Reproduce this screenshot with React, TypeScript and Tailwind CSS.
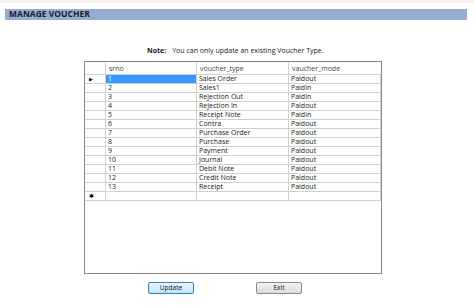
import React from 'react';

const ROWS = [
  { srno: '1', type: 'Sales Order', mode: 'Paidout' },
  { srno: '2', type: 'Sales1', mode: 'Paidin' },
  { srno: '3', type: 'Rejection Out', mode: 'Paidin' },
  { srno: '4', type: 'Rejection In', mode: 'Paidout' },
  { srno: '5', type: 'Receipt Note', mode: 'Paidin' },
  { srno: '6', type: 'Contra', mode: 'Paidout' },
  { srno: '7', type: 'Purchase Order', mode: 'Paidout' },
  { srno: '8', type: 'Purchase', mode: 'Paidout' },
  { srno: '9', type: 'Payment', mode: 'Paidout' },
  { srno: '10', type: 'Journal', mode: 'Paidout' },
  { srno: '11', type: 'Debit Note', mode: 'Paidout' },
  { srno: '12', type: 'Credit Note', mode: 'Paidout' },
  { srno: '13', type: 'Receipt', mode: 'Paidout' },
];

const cell = 'h-[9px] border-r border-b border-[#d0d0d0] pl-[2px] leading-[8px] overflow-hidden whitespace-nowrap';

const App: React.FC = () => {
  return (
    <div
      className="h-[305px] w-[474px] overflow-hidden bg-white text-[7px] text-[#222]"
      style={{ fontFamily: '"Open Sans", "Noto Sans", sans-serif' }}
    >
      {/* top strip */}
      <div className="h-[3px] bg-[#f6f0f0]" />

      {/* title bar */}
      <div className="mx-[5px] mt-[6px] flex h-[11px] w-[462px] items-center bg-[#95adcf] pl-[4px]">
        <span className="text-[8.5px] font-bold leading-none text-[#17202c]">MANAGE VOUCHER</span>
      </div>

      {/* note */}
      <div className="mt-[26px] flex h-[10px] items-center pl-[147px]">
        <span className="font-bold">Note:</span>
        <span className="ml-[6px]">You can only update an existing Voucher Type.</span>
      </div>

      {/* grid */}
      <div className="ml-[84px] mt-[5px] h-[213px] w-[298px] border border-[#8a8a8a] bg-white">
        <div className="grid grid-cols-[21px_91px_92px_92px]">
          {/* header */}
          <div className="h-[13px] border-r border-b border-[#d0d0d0]" />
          <div className="h-[13px] border-r border-b border-[#d0d0d0] pl-[3px] leading-[13px] text-[#444]">srno</div>
          <div className="h-[13px] border-r border-b border-[#d0d0d0] pl-[3px] leading-[13px] text-[#444]">voucher_type</div>
          <div className="h-[13px] border-b border-[#d0d0d0] pl-[3px] leading-[13px] text-[#444]">vaucher_mode</div>

          {ROWS.map((r, i) => (
            <React.Fragment key={r.srno}>
              <div className={`${cell} flex items-center pl-[4px]`}>
                {i === 0 && <span className="text-[5px] leading-none text-black">▶</span>}
              </div>
              <div className={`${cell} ${i === 0 ? 'bg-[#3399ff] text-white' : ''}`}>{r.srno}</div>
              <div className={cell}>{r.type}</div>
              <div className={cell}>{r.mode}</div>
            </React.Fragment>
          ))}

          {/* new row */}
          <div className={`${cell} flex items-center pl-[4px]`}>
            <span className="text-[6px] leading-none text-black">✱</span>
          </div>
          <div className={cell} />
          <div className={cell} />
          <div className={cell} />
        </div>
      </div>

      {/* buttons */}
      <div className="mt-[8px] flex">
        <button className="ml-[148px] h-[12px] w-[46px] rounded-[2px] border border-[#3c7fb1] bg-gradient-to-b from-[#eaf6fd] to-[#bee6fd] text-[6.5px] leading-none text-[#111]">
          Update
        </button>
        <button className="ml-[62px] h-[12px] w-[46px] rounded-[2px] border border-[#8a8a8a] bg-gradient-to-b from-[#f2f2f2] to-[#dcdcdc] text-[6.5px] leading-none text-[#111]">
          Exit
        </button>
      </div>
    </div>
  );
};

export default App;
